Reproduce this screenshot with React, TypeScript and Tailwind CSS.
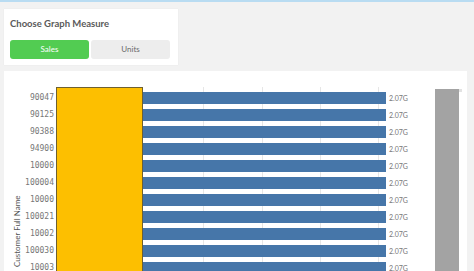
import React from 'react';

const rows = [
  '90047',
  '90125',
  '90388',
  '94900',
  '10000',
  '100004',
  '10000',
  '100021',
  '10002',
  '100030',
  '10003',
];

const gridLines = [147, 206, 264, 322];

export default function App() {
  return (
    <div className="w-[474px] h-[271px] overflow-hidden bg-[#f2f2f2] flex flex-col font-['Lato',sans-serif]">
      <div className="h-[2px] bg-[#b9dcf2] shrink-0" />
      <div className="px-[4px] pt-[7px] flex flex-col gap-[6px] flex-1 min-h-0">
        <div className="w-[174px] h-[56px] bg-white shrink-0 px-[6px] pt-[8px] shadow-[0_0_1px_rgba(0,0,0,0.08)]">
          <div className="text-[9.5px] font-bold text-[#5a5a5a] leading-[13px]">Choose Graph Measure</div>
          <div className="flex gap-[2px] mt-[10px]">
            <button className="w-[79px] h-[19px] rounded-[3px] bg-[#52cc52] text-white text-[8px] leading-[19px]">Sales</button>
            <button className="w-[79px] h-[19px] rounded-[3px] bg-[#ededed] text-[#6b6b6b] text-[8px] leading-[19px]">Units</button>
          </div>
        </div>
        <div className="w-[463px] flex-1 bg-white relative overflow-hidden">
          {/* axis title */}
          <div className="absolute left-[9px] top-[128px] h-[68px] [writing-mode:vertical-rl] rotate-180 text-[8px] text-[#555] whitespace-nowrap leading-[9px] text-center">
            Customer Full Name
          </div>
          <div className="flex pt-[16px]">
            <div className="w-[52px] shrink-0" />
            <div className="w-[330px] relative pt-[5px] flex flex-col gap-[5px]">
              {gridLines.map(x => (
                <div key={x} className="absolute top-0 bottom-[-200px] w-px bg-[#e6e6e6]" style={{ left: x }} />
              ))}
              {rows.map((label, i) => (
                <div key={i} className="relative h-[12px]">
                  <div className="absolute right-[332px] top-[-2px] text-[8px] text-[#777] font-['DejaVu_Sans_Mono',monospace] whitespace-nowrap leading-[16px] text-right">
                    {label}
                  </div>
                  <div className="absolute inset-0 bg-[#4676a9]" />
                  <div className="absolute left-[333px] top-[-1px] text-[7px] text-[#777] leading-[14px] whitespace-nowrap">2.07G</div>
                </div>
              ))}
              <div className="absolute left-0 top-0 w-[87px] h-[400px] bg-[#fdbf00] border border-[#6e6030]" />
            </div>
          </div>
          <div className="absolute left-[431px] top-[18px] w-[24px] h-[300px] bg-[#a3a3a3]">
            <div className="absolute right-[-3px] top-0 w-[3px] h-[3px] bg-[#e2e2e2]" />
          </div>
        </div>
      </div>
    </div>
  );
}
